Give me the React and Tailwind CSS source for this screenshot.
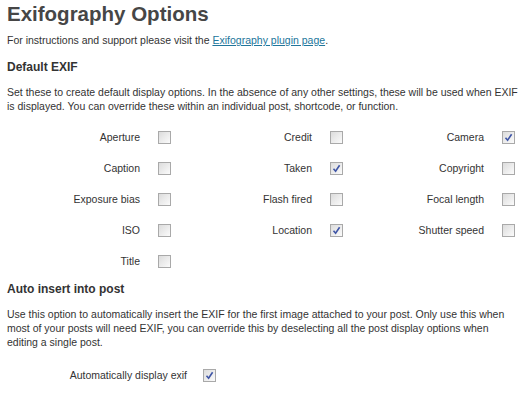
const EXIF_FIELDS = [
  { label: "Aperture", checked: false },
  { label: "Credit", checked: false },
  { label: "Camera", checked: true },
  { label: "Caption", checked: false },
  { label: "Taken", checked: true },
  { label: "Copyright", checked: false },
  { label: "Exposure bias", checked: false },
  { label: "Flash fired", checked: false },
  { label: "Focal length", checked: false },
  { label: "ISO", checked: false },
  { label: "Location", checked: true },
  { label: "Shutter speed", checked: false },
  { label: "Title", checked: false },
];

function Checkbox({ checked }) {
  return (
    <span className="flex h-[13px] w-[13px] flex-none items-center justify-center border border-[#a9a9a9] bg-gradient-to-br from-[#dcdcdc] to-[#fbfbfb]">
      {checked && (
        <svg width="9" height="9" viewBox="0 0 9 9">
          <path
            d="M1.5 4.8 L3.6 7.2 L7.6 1.2"
            fill="none"
            stroke="#3f55a6"
            strokeWidth="1.6"
          />
        </svg>
      )}
    </span>
  );
}

export default function App() {
  return (
    <div
      className="h-[396px] w-[520px] overflow-hidden bg-white pl-[7px] text-[10.5px] leading-[14px] text-[#333]"
      style={{ fontFamily: '"Liberation Sans", Arial, sans-serif' }}
    >
      <h1 className="pt-[1px] text-[20.5px] font-bold leading-[26px] text-[#464646]">
        Exifography Options
      </h1>
      <p className="mt-[6px]">
        For instructions and support please visit the{" "}
        <a href="#" className="text-[#21759b] underline">
          Exifography plugin page
        </a>
        .
      </p>
      <h3 className="mt-[12px] text-[12px] font-bold leading-[16px]">
        Default EXIF
      </h3>
      <p className="mt-[10px] pr-[2px]">
        Set these to create default display options. In the absence of any
        other settings, these will be used when EXIF is displayed. You can
        override these within an individual post, shortcode, or function.
      </p>

      <div className="-ml-[7px] mt-[17px] grid grid-cols-[172px_172px_172px] gap-y-[17px]">
        {EXIF_FIELDS.map((field) => (
          <label key={field.label} className="flex items-center">
            <span className="w-[140px] text-right">{field.label}</span>
            <span className="ml-[18px]">
              <Checkbox checked={field.checked} />
            </span>
          </label>
        ))}
      </div>

      <h3 className="mt-[13px] text-[12px] font-bold leading-[16px]">
        Auto insert into post
      </h3>
      <p className="mt-[10px] pr-[10px]">
        Use this option to automatically insert the EXIF for the first image
        attached to your post. Only use this when most of your posts will need
        EXIF, you can override this by deselecting all the post display options
        when editing a single post.
      </p>

      <label className="-ml-[7px] mt-[19px] flex items-center">
        <span className="w-[187px] text-right">Automatically display exif</span>
        <span className="ml-[16px]">
          <Checkbox checked />
        </span>
      </label>
    </div>
  );
}
